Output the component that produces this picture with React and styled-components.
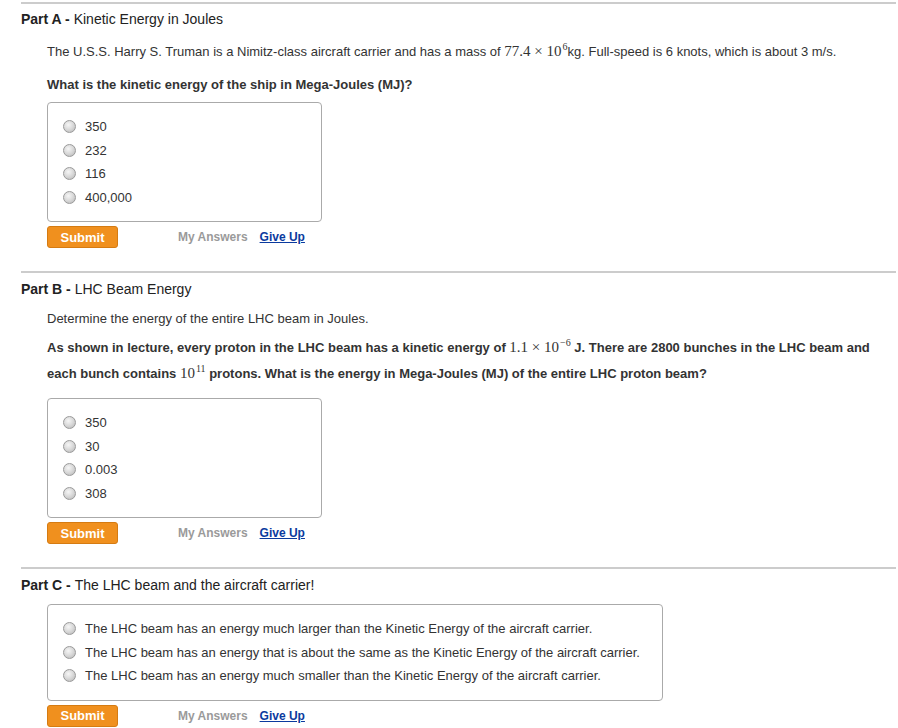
import React from 'react';
import styled, { createGlobalStyle } from 'styled-components';

const GlobalStyle = createGlobalStyle`
  body {
    margin: 0;
    background: #ffffff;
  }
`;

const Page = styled.div`
  padding: 2px 2px 0 21px;
  font-family: "Liberation Sans", Arial, sans-serif;
  color: #333;
`;

const Part = styled.section`
  border-top: 2px solid #cccccc;
  padding-top: 6px;
  & + & {
    margin-top: 23px;
    padding-top: 7px;
  }
`;

const Title = styled.h2`
  margin: 0;
  font-size: 14px;
  line-height: 18px;
  font-weight: normal;
  color: #222;
  b {
    font-weight: bold;
  }
`;

const Body = styled.div`
  padding-left: 26px;
`;

const Para = styled.p`
  margin: ${p => p.$gap}px 0 0;
  font-size: 13px;
  line-height: ${p => p.$lh || 20}px;
  font-weight: ${p => (p.$bold ? 'bold' : 'normal')};
`;

const Math = styled.span`
  font-family: "Liberation Serif", "Times New Roman", serif;
  font-size: 15px;
  line-height: 1;
  font-weight: normal;
  color: #333;
`;

const Sup = styled.span`
  position: relative;
  top: -6px;
  font-size: 10px;
  margin-left: 1px;
`;

const ChoiceBox = styled.div`
  margin-top: ${p => p.$gap}px;
  display: flex;
  flex-direction: column;
  width: fit-content;
  min-width: 275px;
  box-sizing: border-box;
  border: 1px solid #aaaaaa;
  border-radius: 4px;
  padding: 12px 22px 12px 15px;
`;

const Option = styled.label`
  display: flex;
  align-items: center;
  gap: 9px;
  height: 23.5px;
  font-size: 13px;
  color: #333;
`;

const Radio = styled.span`
  width: 11px;
  height: 11px;
  border-radius: 50%;
  border: 1px solid #9a9a9a;
  background: radial-gradient(circle at 40% 35%, #f6f6f6 0%, #d8d8d8 50%, #b4b4b4 100%);
  flex: none;
`;

const Actions = styled.div`
  display: flex;
  align-items: center;
  margin-top: 4px;
`;

const SubmitButton = styled.button`
  width: 71px;
  height: 22px;
  padding: 0;
  background: #f0901e;
  border: 1px solid #d57b12;
  border-radius: 3px;
  color: #ffffff;
  font-family: inherit;
  font-size: 13px;
  font-weight: bold;
`;

const MyAnswers = styled.span`
  margin-left: 60px;
  font-size: 12px;
  font-weight: bold;
  color: #9a9a9a;
`;

const GiveUp = styled.a`
  margin-left: 12px;
  font-size: 12px;
  font-weight: bold;
  color: #0b3a9e;
  text-decoration: underline;
`;

function Choices({ options, gap }) {
  return (
    <>
      <ChoiceBox $gap={gap}>
        {options.map(o => (
          <Option key={o}>
            <Radio />
            {o}
          </Option>
        ))}
      </ChoiceBox>
      <Actions>
        <SubmitButton type="button">Submit</SubmitButton>
        <MyAnswers>My Answers</MyAnswers>
        <GiveUp href="#">Give Up</GiveUp>
      </Actions>
    </>
  );
}

export default function App() {
  return (
    <Page>
      <GlobalStyle />
      <Part>
        <Title><b>Part A - </b>Kinetic Energy in Joules</Title>
        <Body>
          <Para $gap={11} $lh={26}>
            The U.S.S. Harry S. Truman is a Nimitz-class aircraft carrier and has a mass of{' '}
            <Math>77.4 × 10<Sup>6</Sup></Math>kg. Full-speed is 6 knots, which is about 3 m/s.
          </Para>
          <Para $gap={10} $bold>What is the kinetic energy of the ship in Mega-Joules (MJ)?</Para>
          <Choices gap={7} options={['350', '232', '116', '400,000']} />
        </Body>
      </Part>
      <Part>
        <Title><b>Part B - </b>LHC Beam Energy</Title>
        <Body>
          <Para $gap={11}>Determine the energy of the entire LHC beam in Joules.</Para>
          <Para $gap={6} $lh={26} $bold>
            As shown in lecture, every proton in the LHC beam has a kinetic energy of{' '}
            <Math>1.1 × 10<Sup>−6</Sup></Math> J. There are 2800 bunches in the LHC beam and
            each bunch contains <Math>10<Sup>11</Sup></Math> protons. What is the energy in
            Mega-Joules (MJ) of the entire LHC proton beam?
          </Para>
          <Choices gap={11} options={['350', '30', '0.003', '308']} />
        </Body>
      </Part>
      <Part>
        <Title><b>Part C - </b>The LHC beam and the aircraft carrier!</Title>
        <Body>
          <Choices
            gap={10}
            options={[
              'The LHC beam has an energy much larger than the Kinetic Energy of the aircraft carrier.',
              'The LHC beam has an energy that is about the same as the Kinetic Energy of the aircraft carrier.',
              'The LHC beam has an energy much smaller than the Kinetic Energy of the aircraft carrier.',
            ]}
          />
        </Body>
      </Part>
    </Page>
  );
}
